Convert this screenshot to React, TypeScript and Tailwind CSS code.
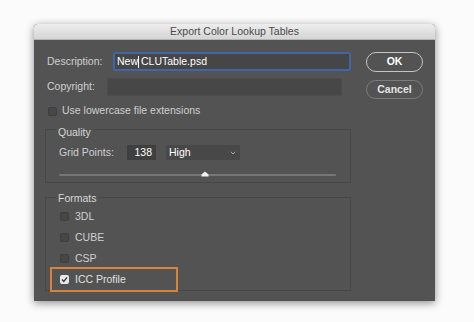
function Checkbox({ checked = false }: { checked?: boolean }) {
  if (checked) {
    return (
      <div className="w-[9px] h-[9px] rounded-[2px] bg-[#e8e8e8] flex items-center justify-center shrink-0">
        <svg width="7" height="7" viewBox="0 0 7 7">
          <path d="M1 3.6 L2.8 5.4 L6 1.4" fill="none" stroke="#3a3a3a" strokeWidth="1.4" />
        </svg>
      </div>
    );
  }
  return <div className="w-[9px] h-[9px] rounded-[2px] bg-[#474747] border border-[#3e3e3e] shrink-0" />;
}

export default function App() {
  const formats = ['3DL', 'CUBE', 'CSP'];

  return (
    <div className="w-[474px] h-[322px] bg-[#fbfbfb] pt-[24px] pl-[34px] overflow-hidden font-['Liberation_Sans',Arial,sans-serif] text-[10.5px]">
      <div className="w-[401px] h-[277px] bg-[#535353] rounded-t-[4px] shadow-[0_2px_8px_rgba(0,0,0,0.45)] flex flex-col">
        {/* Title bar */}
        <div className="h-[16px] rounded-t-[4px] bg-gradient-to-b from-[#ededed] to-[#d5d5d5] border-b border-[#b5b5b5] flex items-center justify-center text-[#4a4a4a]">
          Export Color Lookup Tables
        </div>

        <div className="flex pt-[12px] pl-[11px]">
          <div className="w-[306px] flex flex-col text-[#cfcfcf]">
            {/* Description */}
            <div className="h-[19px] flex items-center">
              <span className="w-[68px] pl-[2px]">Description:</span>
              <div className="w-[238px] h-[19px] bg-[#464646] border-2 border-[#3f66a6] rounded-[2px] pl-[2px] flex items-center text-white">
                <span>New</span>
                <span className="w-px h-[12px] bg-white" />
                <span className="ml-[2px]">CLUTable.psd</span>
              </div>
            </div>

            {/* Copyright */}
            <div className="mt-[7px] h-[18px] flex items-center">
              <span className="w-[62px] pl-[2px]">Copyright:</span>
              <div className="w-[235px] h-[18px] bg-[#474747] border border-[#4c4c4c]" />
            </div>

            {/* Lowercase */}
            <div className="mt-[5px] h-[20px] flex items-center pl-[3px]">
              <Checkbox />
              <span className="ml-[5px]">Use lowercase file extensions</span>
            </div>

            {/* Quality */}
            <div className="mt-[8px] h-[54px] border border-[#474747] flex flex-col">
              <div className="-mt-[3px] ml-[10px] px-[2px] w-fit bg-[#535353] leading-[11px] text-[#d6d6d6]">Quality</div>
              <div className="mt-[7px] h-[15px] flex items-center pl-[13px]">
                <span className="w-[68px]">Grid Points:</span>
                <div className="w-[29px] h-[15px] bg-[#3f3f3f] text-white text-right pr-[4px] leading-[15px]">138</div>
                <div className="ml-[10px] w-[74px] h-[15px] bg-[#484848] text-white flex items-center justify-between pl-[3px] pr-[4px]">
                  <span>High</span>
                  <svg width="6" height="4" viewBox="0 0 6 4">
                    <path d="M0.8 0.8 L3 3 L5.2 0.8" fill="none" stroke="#a8a8a8" strokeWidth="1" />
                  </svg>
                </div>
              </div>
              <div className="mt-[12px] h-[6px] ml-[13px] w-[277px] flex items-center">
                <div className="relative w-full h-[2px] bg-[#767676] rounded-full">
                  <svg className="absolute left-[142px] -top-[3px]" width="8" height="6" viewBox="0 0 8 6">
                    <path d="M0.5 5.5 L0.5 3.5 L4 0.5 L7.5 3.5 L7.5 5.5 Z" fill="#f2f2f2" />
                  </svg>
                </div>
              </div>
            </div>

            {/* Formats */}
            <div className="mt-[14px] h-[94px] border border-[#474747] flex flex-col">
              <div className="-mt-[5px] ml-[10px] px-[2px] w-fit bg-[#535353] leading-[11px] text-[#d6d6d6]">Formats</div>
              <div className="mt-[2px] flex flex-col">
                {formats.map(f => (
                  <div key={f} className="h-[21px] flex items-center pl-[14px]">
                    <Checkbox />
                    <span className="ml-[6px]">{f}</span>
                  </div>
                ))}
                <div className="-mt-[2px] ml-[4px] w-[128px] h-[25px] border-2 border-[#d98239] flex items-center pl-[8px]">
                  <Checkbox checked />
                  <span className="ml-[6px] text-[#e0e0e0]">ICC Profile</span>
                </div>
              </div>
            </div>
          </div>

          {/* Buttons */}
          <div className="ml-[15px] w-[57px] flex flex-col">
            <div className="h-[20px] rounded-full border-[1.5px] border-[#c4c4c4] flex items-center justify-center text-white font-bold">
              OK
            </div>
            <div className="mt-[8px] h-[19px] rounded-full border-[1.5px] border-[#7c7c7c] flex items-center justify-center text-[#e4e4e4] font-bold">
              Cancel
            </div>
          </div>
        </div>
      </div>
    </div>
  );
}
